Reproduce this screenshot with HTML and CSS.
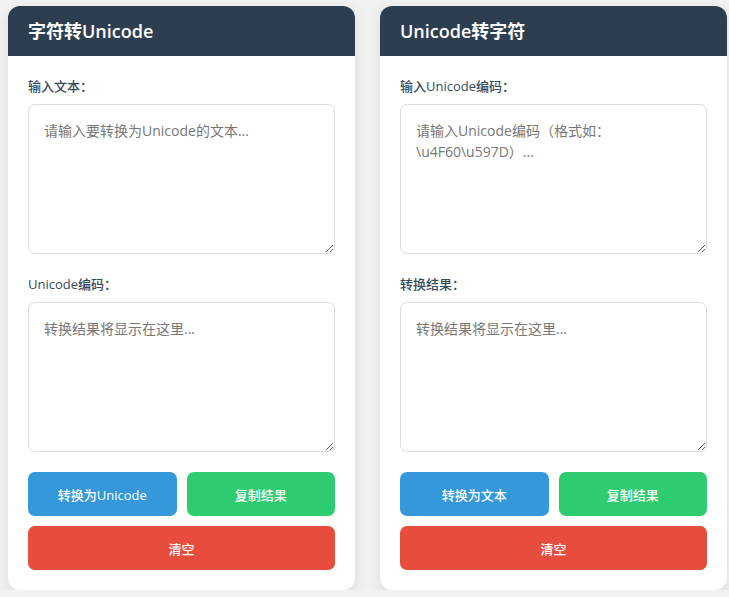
FILE: index.html
```html
<!DOCTYPE html>
<html lang="zh-CN">
<head>
    <meta charset="UTF-8">
    <meta name="viewport" content="width=device-width, initial-scale=1.0">
    <title>Unicode 转换工具</title>
    <link rel="stylesheet" href="styles.css">
</head>
<body>
    <div class="converter">
        <!-- 字符 -> Unicode -->
        <div class="card">
            <div class="card-header">字符转Unicode</div>
            <div class="card-body">
                <div class="form-group">
                    <label for="text-input">输入文本：</label>
                    <textarea id="text-input" placeholder="请输入要转换为Unicode的文本..."></textarea>
                </div>
                <div class="form-group">
                    <label for="unicode-output">Unicode编码：</label>
                    <textarea id="unicode-output" placeholder="转换结果将显示在这里..." readonly></textarea>
                </div>
                <div class="btn-row">
                    <button class="btn btn-blue" id="to-unicode">转换为Unicode</button>
                    <button class="btn btn-green" id="copy-unicode">复制结果</button>
                </div>
                <button class="btn btn-red btn-block" id="clear-left">清空</button>
            </div>
        </div>

        <!-- Unicode -> 字符 -->
        <div class="card">
            <div class="card-header">Unicode转字符</div>
            <div class="card-body">
                <div class="form-group">
                    <label for="unicode-input">输入Unicode编码：</label>
                    <textarea id="unicode-input" placeholder="请输入Unicode编码（格式如：\u4F60\u597D）..."></textarea>
                </div>
                <div class="form-group">
                    <label for="text-output">转换结果：</label>
                    <textarea id="text-output" placeholder="转换结果将显示在这里..." readonly></textarea>
                </div>
                <div class="btn-row">
                    <button class="btn btn-blue" id="to-text">转换为文本</button>
                    <button class="btn btn-green" id="copy-text">复制结果</button>
                </div>
                <button class="btn btn-red btn-block" id="clear-right">清空</button>
            </div>
        </div>
    </div>

    <script>
        const $ = (id) => document.getElementById(id);

        // 字符转 \uXXXX
        $('to-unicode').addEventListener('click', () => {
            const text = $('text-input').value;
            let out = '';
            for (let i = 0; i < text.length; i++) {
                out += '\\u' + text.charCodeAt(i).toString(16).toUpperCase().padStart(4, '0');
            }
            $('unicode-output').value = out;
        });

        // \uXXXX 转字符
        $('to-text').addEventListener('click', () => {
            const code = $('unicode-input').value;
            $('text-output').value = code.replace(/\\u([0-9a-fA-F]{4})/g, (m, hex) => String.fromCharCode(parseInt(hex, 16)));
        });

        const copy = (id) => {
            const el = $(id);
            if (!el.value) return;
            navigator.clipboard && navigator.clipboard.writeText(el.value);
        };

        $('copy-unicode').addEventListener('click', () => copy('unicode-output'));
        $('copy-text').addEventListener('click', () => copy('text-output'));

        $('clear-left').addEventListener('click', () => {
            $('text-input').value = '';
            $('unicode-output').value = '';
        });
        $('clear-right').addEventListener('click', () => {
            $('unicode-input').value = '';
            $('text-output').value = '';
        });
    </script>
</body>
</html>
```

FILE: styles.css
```css
body {
    font-family: 'Open Sans', 'Noto Sans CJK SC', sans-serif;
    margin: 0;
    padding: 6px 0 0 8px;
    background-color: #f2f2f2;
    color: #2c3e50;
}

.converter {
    display: flex;
    gap: 25px;
}

.card {
    width: 347px;
    flex-shrink: 0;
    background-color: #fff;
    border-radius: 12px;
    box-shadow: 0 4px 14px rgba(0, 0, 0, 0.1);
    overflow: hidden;
}

.card-header {
    background-color: #2c3e50;
    color: #fff;
    height: 50px;
    line-height: 50px;
    padding: 0 20px;
    font-size: 18px;
    font-weight: 600;
}

.card-body {
    padding: 20px;
}

.form-group {
    margin-bottom: 20px;
}

label {
    display: block;
    font-size: 13px;
    font-weight: 500;
    line-height: 20px;
    margin-bottom: 8px;
    color: #34495e;
}

textarea {
    display: block;
    width: 100%;
    height: 150px;
    box-sizing: border-box;
    padding: 15px;
    border: 1px solid #ddd;
    border-radius: 7px;
    font-family: inherit;
    font-size: 14px;
    line-height: 21px;
    color: #333;
    outline: none;
}

textarea::placeholder {
    color: #777;
}

.btn-row {
    display: flex;
    gap: 10px;
    margin-bottom: 10px;
}

.btn {
    flex: 1;
    height: 44px;
    border: none;
    border-radius: 7px;
    color: #fff;
    font-family: inherit;
    font-size: 13px;
    font-weight: 500;
    cursor: pointer;
}

.btn-block {
    display: block;
    width: 100%;
}

.btn-blue {
    background-color: #3498db;
}

.btn-green {
    background-color: #2ecc71;
}

.btn-red {
    background-color: #e74c3c;
}
```
